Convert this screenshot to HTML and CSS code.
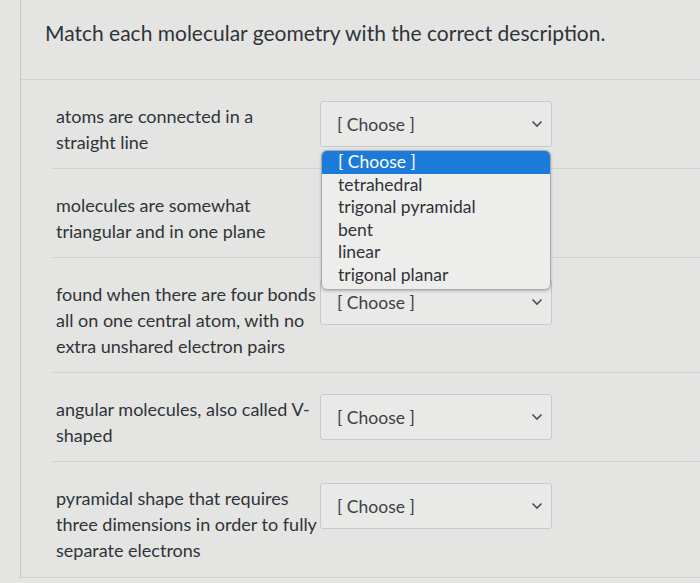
FILE: index.html
```html
<!DOCTYPE html>
<html lang="en">
<head>
    <meta charset="UTF-8">
    <meta name="viewport" content="width=device-width, initial-scale=1.0">
    <title>Matching question</title>

    <link rel="stylesheet" href="styles.css">
</head>
<body>
    <div class="question">
        <div class="question_header">
            <p class="question_text">Match each molecular geometry with the correct description.</p>
        </div>

        <div class="answers">
            <div class="answer">
                <div class="answer_label">atoms are connected in a<br>straight line</div>
                <div class="answer_select open">
                    <div class="select_box">
                        <span>[ Choose ]</span>
                        <svg class="chevron" viewBox="0 0 12 8" width="12" height="8"><path d="M1.5 1.5 L6 6 L10.5 1.5" fill="none" stroke="#4a4f55" stroke-width="1.6"/></svg>
                    </div>
                    <ul class="select_menu">
                        <li class="selected">[ Choose ]</li>
                        <li>tetrahedral</li>
                        <li>trigonal pyramidal</li>
                        <li>bent</li>
                        <li>linear</li>
                        <li>trigonal planar</li>
                    </ul>
                </div>
            </div>

            <div class="answer">
                <div class="answer_label">molecules are somewhat triangular and in one plane</div>
                <!-- covered by the open menu above -->
                <div class="answer_select covered">
                    <div class="select_box">
                        <span>[ Choose ]</span>
                        <svg class="chevron" viewBox="0 0 12 8" width="12" height="8"><path d="M1.5 1.5 L6 6 L10.5 1.5" fill="none" stroke="#4a4f55" stroke-width="1.6"/></svg>
                    </div>
                </div>
            </div>

            <div class="answer">
                <div class="answer_label">found when there are four bonds all on one central atom, with no extra unshared electron pairs</div>
                <div class="answer_select">
                    <div class="select_box">
                        <span>[ Choose ]</span>
                        <svg class="chevron" viewBox="0 0 12 8" width="12" height="8"><path d="M1.5 1.5 L6 6 L10.5 1.5" fill="none" stroke="#4a4f55" stroke-width="1.6"/></svg>
                    </div>
                </div>
            </div>

            <div class="answer">
                <div class="answer_label">angular molecules, also called V-shaped</div>
                <div class="answer_select">
                    <div class="select_box">
                        <span>[ Choose ]</span>
                        <svg class="chevron" viewBox="0 0 12 8" width="12" height="8"><path d="M1.5 1.5 L6 6 L10.5 1.5" fill="none" stroke="#4a4f55" stroke-width="1.6"/></svg>
                    </div>
                </div>
            </div>

            <div class="answer last">
                <div class="answer_label">pyramidal shape that requires three dimensions in order to fully separate electrons</div>
                <div class="answer_select">
                    <div class="select_box">
                        <span>[ Choose ]</span>
                        <svg class="chevron" viewBox="0 0 12 8" width="12" height="8"><path d="M1.5 1.5 L6 6 L10.5 1.5" fill="none" stroke="#4a4f55" stroke-width="1.6"/></svg>
                    </div>
                </div>
            </div>
        </div>
    </div>
</body>
</html>
```

FILE: styles.css
```css
body
{
    margin: 0px;
    background-color: #e4e4e3;
    font-family: Lato, "Open Sans", sans-serif;
    color: #2f3438;
    overflow: hidden;
}

.question
{
    margin-left: 20px;
    height: 578px;
    border-left: 1px solid #c9c9c9;
    border-bottom: 1px solid #cfcfcf;
    box-sizing: border-box;
}

.question_header
{
    height: 80px;
    box-sizing: border-box;
    padding: 19px 0px 0px 24px;
    border-bottom: 1px solid #d2d2d2;
}

.question_text
{
    margin: 0px;
    font-size: 21px;
    line-height: 28px;
}

.answers
{
    padding-left: 31px;
}

.answer
{
    display: flex;
    align-items: flex-start;
    padding: 23px 0px 13px 4px;
    border-bottom: 1px solid #d2d2d2;
}

.answer.last
{
    border-bottom: none;
}

.answer_label
{
    width: 264px;
    font-size: 18px;
    line-height: 26px;
}

.answer_select
{
    position: relative;
    width: 232px;
    margin-top: -2px;
}

.answer_select.covered
{
    visibility: hidden;
}

.select_box
{
    display: flex;
    align-items: center;
    justify-content: space-between;
    height: 46px;
    box-sizing: border-box;
    padding: 0px 8px 0px 16px;
    background-color: #e9e9e8;
    border: 1px solid #c6cacd;
    border-radius: 3px;
    font-size: 17.5px;
    color: #3b4147;
}

.select_menu
{
    position: absolute;
    top: 49px;
    left: 1px;
    right: 1px;
    z-index: 2;
    margin: 0px;
    padding: 0px 0px 2px 0px;
    list-style: none;
    background-color: #ededec;
    border: 1px solid #a9adb1;
    border-radius: 6px;
    box-shadow: 0px 1px 3px rgba(0, 0, 0, 0.25);
    overflow: hidden;
}

.select_menu li
{
    height: 22.6px;
    line-height: 22.6px;
    padding-left: 16px;
    font-size: 17.5px;
    color: #2f3438;
}

.select_menu li.selected
{
    background-color: #1c7ad9;
    color: #ffffff;
}
```
